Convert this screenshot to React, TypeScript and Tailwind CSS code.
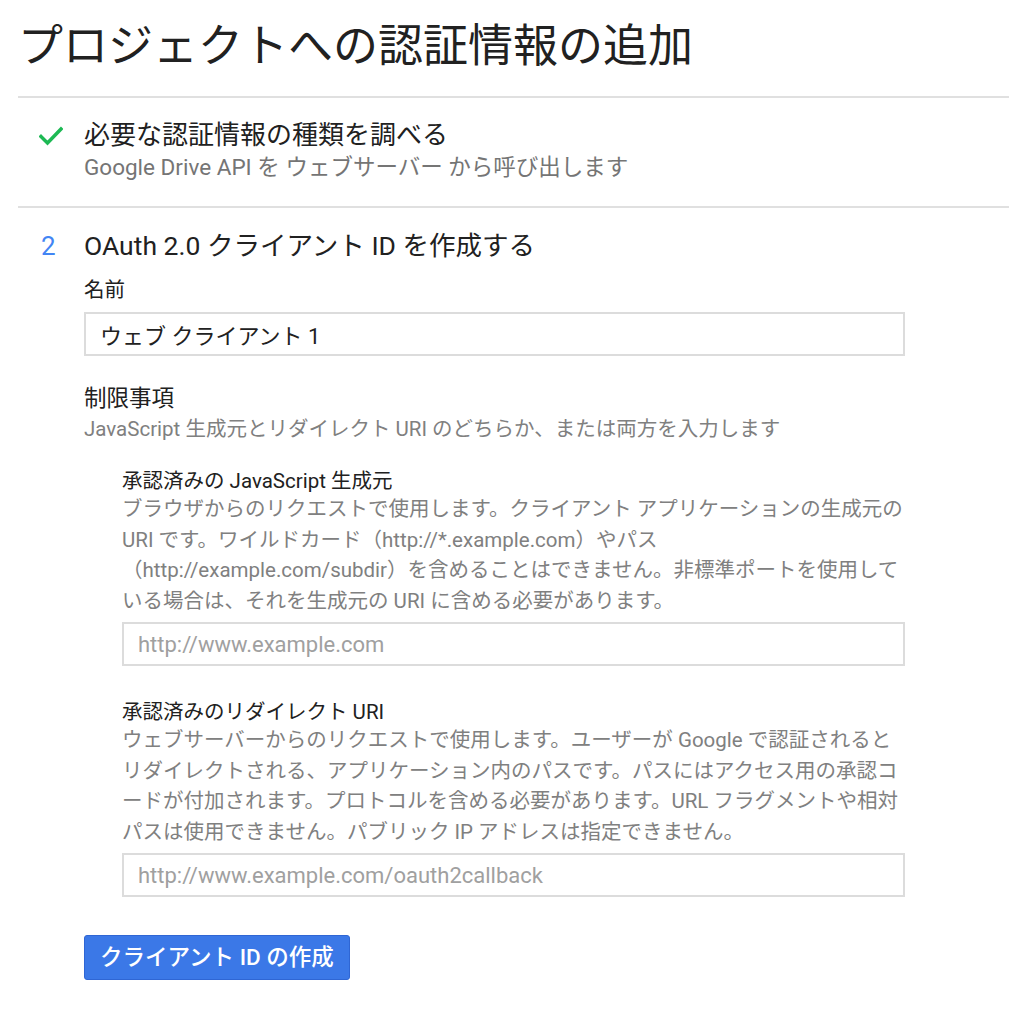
import React from 'react';

const jsOriginLines = [
  'ブラウザからのリクエストで使用します。クライアント アプリケーションの生成元の',
  'URI です。ワイルドカード（http://*.example.com）やパス',
  '（http://example.com/subdir）を含めることはできません。非標準ポートを使用して',
  'いる場合は、それを生成元の URI に含める必要があります。',
];

const redirectLines = [
  'ウェブサーバーからのリクエストで使用します。ユーザーが Google で認証されると',
  'リダイレクトされる、アプリケーション内のパスです。パスにはアクセス用の承認コ',
  'ードが付加されます。プロトコルを含める必要があります。URL フラグメントや相対',
  'パスは使用できません。パブリック IP アドレスは指定できません。',
];

const Field: React.FC<{ placeholder?: string; value?: string }> = ({ placeholder, value }) => (
  <input
    readOnly
    defaultValue={value}
    placeholder={placeholder}
    className="block w-full h-[44px] border-2 border-[#dcdcdc] bg-white px-[14px] text-[22px] text-[#212121] placeholder:text-[#a0a0a0] outline-none"
  />
);

const OriginBlock: React.FC<{ title: string; lines: string[]; placeholder: string }> = ({
  title,
  lines,
  placeholder,
}) => (
  <div className="ml-[38px]">
    <div className="text-[20.5px] leading-[25px] text-[#212121]">{title}</div>
    <div className="text-[20.5px] leading-[30.5px] text-[#808080]">
      {lines.map((line) => (
        <div key={line} className="whitespace-nowrap">
          {line}
        </div>
      ))}
    </div>
    <div className="mt-[6px]">
      <Field placeholder={placeholder} />
    </div>
  </div>
);

export default function App() {
  return (
    <div className="w-[1009px] h-[1024px] overflow-hidden bg-white font-['Roboto','Noto_Sans_CJK_JP',sans-serif] text-[#212121]">
      {/* Title */}
      <h1 className="pl-[18px] pt-[21px] text-[45px] leading-[52px] font-normal">
        プロジェクトへの認証情報の追加
      </h1>
      <div className="ml-[18px] mt-[23px] h-[2px] bg-[#e0e0e0]" />

      {/* Step 1 */}
      <div className="flex pt-[20px]">
        <div className="w-[84px] flex justify-center pl-[18px] pt-[8px]">
          <svg width="24" height="20" viewBox="0 0 24 20" fill="none">
            <path d="M2 10.5 L8.5 17 L22 3" stroke="#1db954" strokeWidth="3.4" strokeLinecap="square" />
          </svg>
        </div>
        <div>
          <div className="text-[26px] leading-[34px]">必要な認証情報の種類を調べる</div>
          <div className="text-[22.5px] leading-[30px] text-[#757575]">
            Google Drive API を ウェブサーバー から呼び出します
          </div>
        </div>
      </div>
      <div className="ml-[18px] mt-[24px] h-[2px] bg-[#e0e0e0]" />

      {/* Step 2 */}
      <div className="flex pt-[21px]">
        <div className="w-[84px] pl-[41px] text-[26px] leading-[34px] text-[#4285f4]">2</div>
        <div className="w-[821px]">
          <div className="text-[26.5px] leading-[34px]">OAuth 2.0 クライアント ID を作成する</div>

          <div className="mt-[13px] text-[20.5px] leading-[28px]">名前</div>
          <div className="mt-[8px]">
            <Field value="ウェブ クライアント 1" />
          </div>

          <div className="mt-[26px] text-[22.5px] leading-[32px]">制限事項</div>
          <div className="text-[20.5px] leading-[30px] text-[#808080] whitespace-nowrap">
            JavaScript 生成元とリダイレクト URI のどちらか、または両方を入力します
          </div>

          <div className="mt-[25px]">
            <OriginBlock
              title="承認済みの JavaScript 生成元"
              lines={jsOriginLines}
              placeholder="http://www.example.com"
            />
          </div>

          <div className="mt-[34px]">
            <OriginBlock
              title="承認済みのリダイレクト URI"
              lines={redirectLines}
              placeholder="http://www.example.com/oauth2callback"
            />
          </div>

          <button className="mt-[38px] h-[45px] rounded-[3px] border border-[#2f66d4] bg-[#3b78e7] px-[15px] text-[22.5px] font-medium text-white">
            クライアント ID の作成
          </button>
        </div>
      </div>
    </div>
  );
}
